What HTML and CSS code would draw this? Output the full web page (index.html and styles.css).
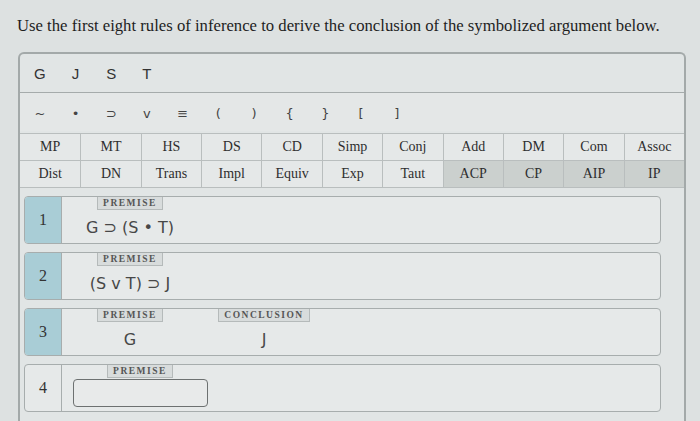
FILE: index.html
```html
<!DOCTYPE html>
<html>
<head>
<meta charset="utf-8">
<link rel="stylesheet" href="styles.css">
</head>
<body>
<p class="title">Use the first eight rules of inference to derive the conclusion of the symbolized argument below.</p>
<div class="panel">
  <div class="vars">
    <span class="key">G</span><span class="key">J</span><span class="key">S</span><span class="key">T</span>
  </div>
  <div class="ops">
    <span class="op">~</span><span class="op">•</span><span class="op">⊃</span><span class="op">v</span><span class="op">≡</span><span class="op">(</span><span class="op">)</span><span class="op">{</span><span class="op">}</span><span class="op">[</span><span class="op">]</span>
  </div>
  <div class="rules">
    <div class="rule">MP</div><div class="rule">MT</div><div class="rule">HS</div><div class="rule">DS</div><div class="rule">CD</div><div class="rule">Simp</div><div class="rule">Conj</div><div class="rule">Add</div><div class="rule">DM</div><div class="rule">Com</div><div class="rule">Assoc</div>
    <div class="rule">Dist</div><div class="rule">DN</div><div class="rule">Trans</div><div class="rule">Impl</div><div class="rule">Equiv</div><div class="rule">Exp</div><div class="rule">Taut</div><div class="rule dark">ACP</div><div class="rule dark">CP</div><div class="rule dark">AIP</div><div class="rule dark">IP</div>
  </div>
  <div class="proof">
    <div class="line">
      <div class="num given">1</div>
      <div class="content">
        <div class="group"><span class="tag">PREMISE</span><span class="formula">G ⊃ (S • T)</span></div>
      </div>
    </div>
    <div class="line">
      <div class="num given">2</div>
      <div class="content">
        <div class="group"><span class="tag">PREMISE</span><span class="formula">(S v T) ⊃ J</span></div>
      </div>
    </div>
    <div class="line">
      <div class="num given">3</div>
      <div class="content">
        <div class="group"><span class="tag">PREMISE</span><span class="formula">G</span></div>
        <div class="group"><span class="tag">CONCLUSION</span><span class="formula">J</span></div>
      </div>
    </div>
    <div class="line">
      <div class="num">4</div>
      <div class="content entry">
        <div class="group wide"><span class="tag">PREMISE</span><span class="input"></span></div>
      </div>
    </div>
  </div>
</div>
</body>
</html>
```
FILE: styles.css
```css
html, body {
  margin: 0;
  padding: 0;
  background: #dde1e1;
  height: 421px;
  overflow: hidden;
}
.title {
  margin: 0;
  padding: 17px 0 0 17px;
  height: 37px;
  box-sizing: border-box;
  font-family: "Liberation Serif", serif;
  font-size: 16.7px;
  line-height: 18px;
  color: #1e1e1e;
}
.panel {
  margin-left: 18px;
  width: 668px;
  margin-top: 15px;
  box-sizing: border-box;
  border: 2px solid #a3a9a9;
  border-bottom: none;
  border-radius: 6px 6px 0 0;
  background: #e1e5e5;
  height: 369px;
  overflow: hidden;
}
.vars {
  display: flex;
  height: 38px;
  align-items: center;
  padding-left: 2px;
  border-bottom: 1px solid #a5abab;
}
.key {
  width: 35.7px;
  text-align: center;
  font-family: "Liberation Sans", Arial, sans-serif;
  font-size: 15px;
  color: #333;
}
.ops {
  display: flex;
  height: 38px;
  align-items: center;
  padding-left: 2px;
  padding-top: 2px;
  box-sizing: border-box;
  background: #e4e7e7;
}
.op {
  width: 35.7px;
  text-align: center;
  font-family: "DejaVu Sans", sans-serif;
  font-size: 13px;
  color: #444;
}
.rules {
  margin-top: 2px;
  display: grid;
  grid-template-columns: repeat(11, 1fr);
  border-top: 1px solid #b9bebe;
  border-bottom: 1px solid #b9bebe;
}
.rule {
  height: 26px;
  display: flex;
  align-items: center;
  justify-content: center;
  font-family: "Liberation Serif", serif;
  font-size: 14px;
  color: #2e2e2e;
  background: #e5e8e8;
  border-left: 1px solid #b9bebe;
}
.rule:nth-child(-n+11) {
  border-bottom: 1px solid #b9bebe;
}
.rule:nth-child(11n+1) {
  border-left: none;
}
.rule.dark {
  background: #cbd0ce;
}
.proof {
  display: flex;
  flex-direction: column;
  gap: 8px;
  padding: 8px 0 0 4px;
}
.line {
  display: flex;
  flex: none;
  width: 637px;
  height: 48px;
  box-sizing: border-box;
  border: 1.5px solid #a7adad;
  border-radius: 4px;
  background: #e6e9e9;
  overflow: hidden;
}
.num {
  width: 36px;
  flex: none;
  display: flex;
  align-items: center;
  justify-content: center;
  border-right: 1px solid #a7adad;
  font-family: "Liberation Serif", serif;
  font-size: 16px;
  color: #333;
}
.num.given {
  background: #a9cdd6;
}
.content {
  display: flex;
  gap: 34px;
  padding-left: 18px;
}
.content.entry {
  padding-left: 10px;
}
.group {
  width: 100px;
  display: flex;
  flex-direction: column;
  align-items: center;
}
.group.wide {
  width: 136px;
}
.tag {
  margin-top: -1px;
  padding: 1px 5px 0;
  height: 14px;
  box-sizing: border-box;
  background: #d8dcdc;
  border: 1px solid #b5baba;
  font-family: "Liberation Serif", serif;
  font-weight: bold;
  font-size: 9.5px;
  line-height: 11px;
  letter-spacing: 1.5px;
  color: #555;
}
.formula {
  margin-top: 8px;
  font-family: "DejaVu Sans", sans-serif;
  font-size: 16px;
  color: #474747;
  white-space: nowrap;
}
.input {
  margin-top: 1px;
  width: 135px;
  height: 28px;
  box-sizing: border-box;
  border: 1.5px solid #6d7171;
  border-radius: 4px;
  background: #e8eaea;
}
```
